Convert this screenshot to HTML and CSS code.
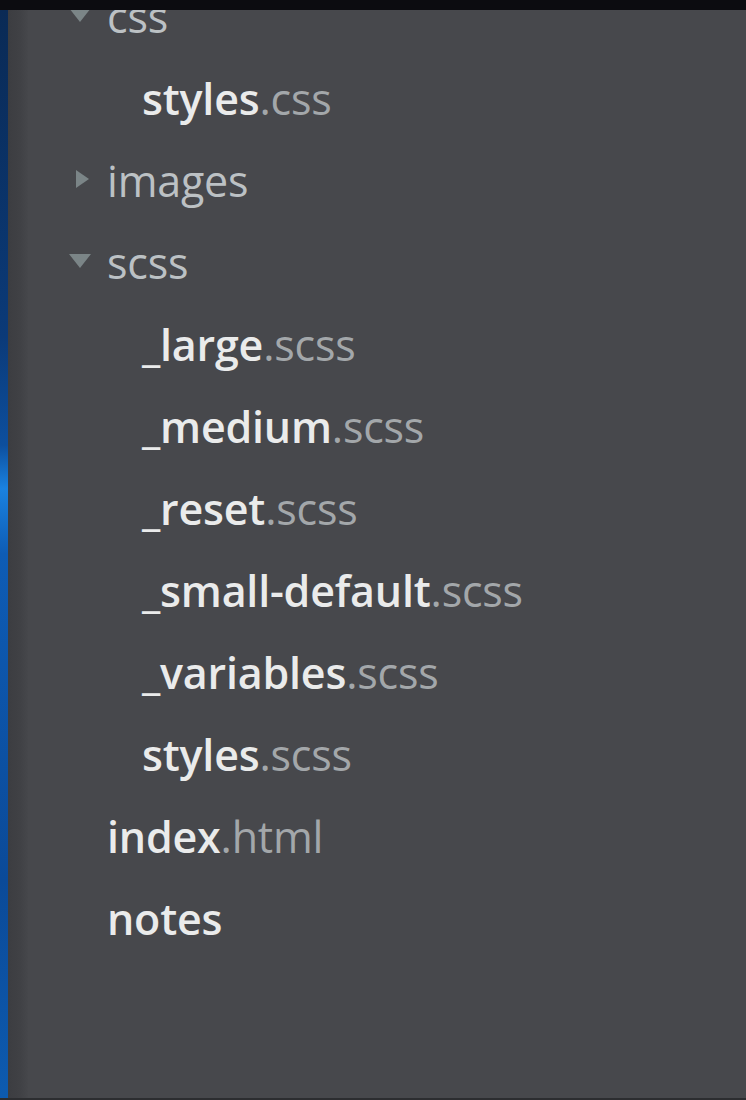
FILE: index.html
```html
<!DOCTYPE html>
<html>
<head>
<meta charset="utf-8">
<link rel="stylesheet" href="styles.css">
</head>
<body>
<div class="app">
  <div class="topbar"></div>
  <div class="main">
    <div class="accent"></div>
    <div class="gutter"></div>
    <div class="panel">
      <ul class="tree">
        <li class="row folder lvl0"><span class="twisty open"></span><span class="name">css</span></li>
        <li class="row file lvl1"><span class="name">styles</span><span class="ext">.css</span></li>
        <li class="row folder lvl0"><span class="twisty closed"></span><span class="name">images</span></li>
        <li class="row folder lvl0"><span class="twisty open"></span><span class="name">scss</span></li>
        <li class="row file lvl1"><span class="name">_large</span><span class="ext">.scss</span></li>
        <li class="row file lvl1"><span class="name">_medium</span><span class="ext">.scss</span></li>
        <li class="row file lvl1"><span class="name">_reset</span><span class="ext">.scss</span></li>
        <li class="row file lvl1"><span class="name">_small-default</span><span class="ext">.scss</span></li>
        <li class="row file lvl1"><span class="name">_variables</span><span class="ext">.scss</span></li>
        <li class="row file lvl1"><span class="name">styles</span><span class="ext">.scss</span></li>
        <li class="row file lvl0"><span class="name">index</span><span class="ext">.html</span></li>
        <li class="row file lvl0"><span class="name">notes</span></li>
      </ul>
    </div>
  </div>
  <div class="bottombar"></div>
</div>
</body>
</html>
```
FILE: styles.css
```css
html, body {
  margin: 0;
  padding: 0;
  background: #47484c;
}
.app {
  width: 746px;
  height: 1100px;
  display: flex;
  flex-direction: column;
  overflow: hidden;
}
.topbar {
  height: 10px;
  background: #0c0c10;
  flex: none;
}
.bottombar {
  height: 2px;
  background: #2c2d30;
  flex: none;
}
.main {
  flex: 1;
  display: flex;
  min-height: 0;
}
.accent {
  width: 8px;
  flex: none;
  background: linear-gradient(to bottom, #0a2a55 0%, #0b3a78 30%, #0d4f9e 40%, #1a82e0 44%, #0e5cb5 50%, #0b4a98 80%, #0d5bb0 100%);
}
.gutter {
  width: 20px;
  flex: none;
  background: linear-gradient(to right, #3c3d41, #404145 60%, #46474b);
}
.panel {
  flex: 1;
  overflow: hidden;
  background: #47484c;
}
.tree {
  list-style: none;
  margin: -35px 0 0 0;
  padding: 0;
  font-family: "Open Sans", Lato, sans-serif;
  font-size: 43px;
  font-weight: 600;
  letter-spacing: -0.2px;
}
.row {
  height: 82px;
  display: flex;
  align-items: center;
  white-space: nowrap;
}
.lvl0 { padding-left: 79px; }
.lvl1 { padding-left: 114px; }
.folder.lvl0 { padding-left: 41px; }
.twisty {
  width: 38px;
  height: 20px;
  flex: none;
  position: relative;
}
.twisty::before {
  content: "";
  position: absolute;
  width: 0;
  height: 0;
}
.twisty.open::before {
  left: 0;
  top: 2px;
  border-left: 11px solid transparent;
  border-right: 11px solid transparent;
  border-top: 14px solid #7b8587;
}
.twisty.closed::before {
  left: 7px;
  top: 0;
  border-top: 9px solid transparent;
  border-bottom: 9px solid transparent;
  border-left: 13px solid #7b8587;
}
.name {
  color: #eaebeb;
}
.folder .name {
  color: #bcc1c4;
  font-weight: 500;
}
.ext {
  color: #a3a7aa;
  font-weight: 500;
}
```
